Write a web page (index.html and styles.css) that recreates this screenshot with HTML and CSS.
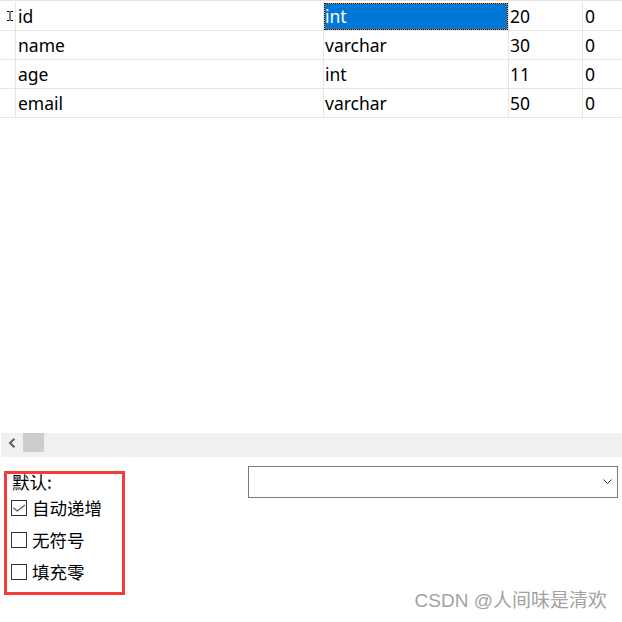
FILE: index.html
```html
<!DOCTYPE html>
<html lang="zh">
<head>
<meta charset="utf-8">
<title>表设计</title>
<link rel="stylesheet" href="styles.css">
</head>
<body>
<div class="page">
  <div class="grid">
    <div class="row">
      <div class="cell gutter">
        <svg class="ibeam" width="6" height="10" viewBox="0 0 6 10"><path d="M0 0.5H2.5M3.5 0.5H6M3 1V9M0 9.5H2.5M3.5 9.5H6" stroke="#000" stroke-width="1" fill="none"/></svg>
      </div>
      <div class="cell c-name">id</div>
      <div class="cell c-type"><span class="selected">int</span></div>
      <div class="cell c-len">20</div>
      <div class="cell c-dec">0</div>
    </div>
    <div class="row">
      <div class="cell gutter"></div>
      <div class="cell c-name">name</div>
      <div class="cell c-type">varchar</div>
      <div class="cell c-len">30</div>
      <div class="cell c-dec">0</div>
    </div>
    <div class="row">
      <div class="cell gutter"></div>
      <div class="cell c-name">age</div>
      <div class="cell c-type">int</div>
      <div class="cell c-len">11</div>
      <div class="cell c-dec">0</div>
    </div>
    <div class="row">
      <div class="cell gutter"></div>
      <div class="cell c-name">email</div>
      <div class="cell c-type">varchar</div>
      <div class="cell c-len">50</div>
      <div class="cell c-dec">0</div>
    </div>
  </div>
  <div class="empty"></div>
  <div class="hscroll">
    <svg class="arrow" width="8" height="10" viewBox="0 0 8 10"><path d="M6.5 0.8L2 5L6.5 9.2" stroke="#606060" stroke-width="2" fill="none"/></svg>
    <div class="thumb"></div>
  </div>
  <div class="bottom">
    <div class="options">
      <div class="label">默认:</div>
      <div class="check-row">
        <span class="box">
          <svg width="14" height="14" viewBox="0 0 14 14"><path d="M1.3 6.7L5.3 10L13 4" stroke="#555" stroke-width="1.2" fill="none"/></svg>
        </span>
        <span class="check-text">自动递增</span>
      </div>
      <div class="check-row">
        <span class="box"></span>
        <span class="check-text">无符号</span>
      </div>
      <div class="check-row">
        <span class="box"></span>
        <span class="check-text">填充零</span>
      </div>
    </div>
    <div class="select">
      <svg width="9" height="5" viewBox="0 0 9 5"><path d="M0.5 0.5L4.5 4.5L8.5 0.5" stroke="#333" stroke-width="1" fill="none"/></svg>
    </div>
  </div>
  <div class="watermark">CSDN @人间味是清欢</div>
</div>
</body>
</html>
```

FILE: styles.css
```css
html, body {
  margin: 0;
  padding: 0;
  background: #ffffff;
}

.page {
  position: relative;
  width: 622px;
  height: 622px;
  overflow: hidden;
  display: flex;
  flex-direction: column;
  font-family: "Noto Sans", "Noto Sans CJK SC", sans-serif;
  color: #000;
}

.grid {
  border-top: 1px solid #e6e6e6;
  padding-top: 1px;
}

.row {
  display: flex;
  height: 29px;
  box-sizing: border-box;
  border-bottom: 1px solid #e6e6e6;
}

.cell {
  box-sizing: border-box;
  border-right: 1px solid #e6e6e6;
  font-size: 17.5px;
  line-height: 28px;
  white-space: nowrap;
  overflow: hidden;
}

.gutter {
  width: 16px;
  display: flex;
  align-items: flex-start;
  padding: 9px 0 0 7px;
}

.c-name {
  width: 308px;
  padding-left: 2px;
}

.c-type {
  width: 185px;
  padding-left: 0;
}

.c-type:not(:has(.selected)) {
  padding-left: 1px;
}

.c-len {
  width: 74px;
  padding-left: 1px;
}

.c-dec {
  flex: 1;
  border-right: none;
  padding-left: 2px;
}

.selected {
  display: block;
  height: 27px;
  margin-top: 1px;
  box-sizing: border-box;
  border: 1px dotted #111;
  background-color: #ff8728;
  box-shadow: inset 0 0 0 200px #0078d7;
  color: #fff;
  line-height: 25px;
  padding-left: 0;
}

.empty {
  flex: 1;
}

.hscroll {
  height: 24px;
  margin-left: 1px;
  background: #f0f0f0;
  display: flex;
  align-items: flex-start;
  flex: none;
}

.arrow {
  margin: 5px 0 0 7px;
}

.thumb {
  width: 21px;
  height: 19px;
  margin-left: 7px;
  background: #cdcdcd;
}

.bottom {
  height: 165px;
  flex: none;
  display: flex;
  align-items: flex-start;
}

.options {
  width: 121px;
  height: 124px;
  box-sizing: border-box;
  margin: 14px 0 0 4px;
  border: 3px solid #f53a3a;
  padding-left: 4px;
  font-family: "Noto Sans CJK SC", sans-serif;
  font-size: 17.5px;
}

.label {
  line-height: 20px;
  margin-top: -2px;
  padding-left: 1px;
}

.check-row {
  height: 32px;
  display: flex;
  align-items: center;
}

.box {
  width: 16px;
  height: 16px;
  box-sizing: border-box;
  border: 1px solid #333;
  background: #fff;
  display: flex;
  align-items: center;
  justify-content: center;
  flex: none;
}

.check-text {
  margin-left: 5px;
  line-height: 20px;
}

.select {
  width: 370px;
  height: 32px;
  box-sizing: border-box;
  margin: 9px 0 0 123px;
  border: 1px solid #7a7a7a;
  display: flex;
  align-items: center;
  justify-content: flex-end;
  padding: 0 5px 2px 0;
}

.watermark {
  position: absolute;
  right: 15px;
  top: 589px;
  font-family: "Liberation Sans", "Noto Sans CJK SC", sans-serif;
  font-size: 19px;
  line-height: 24px;
  color: #a2a2a2;
  white-space: nowrap;
}
```
